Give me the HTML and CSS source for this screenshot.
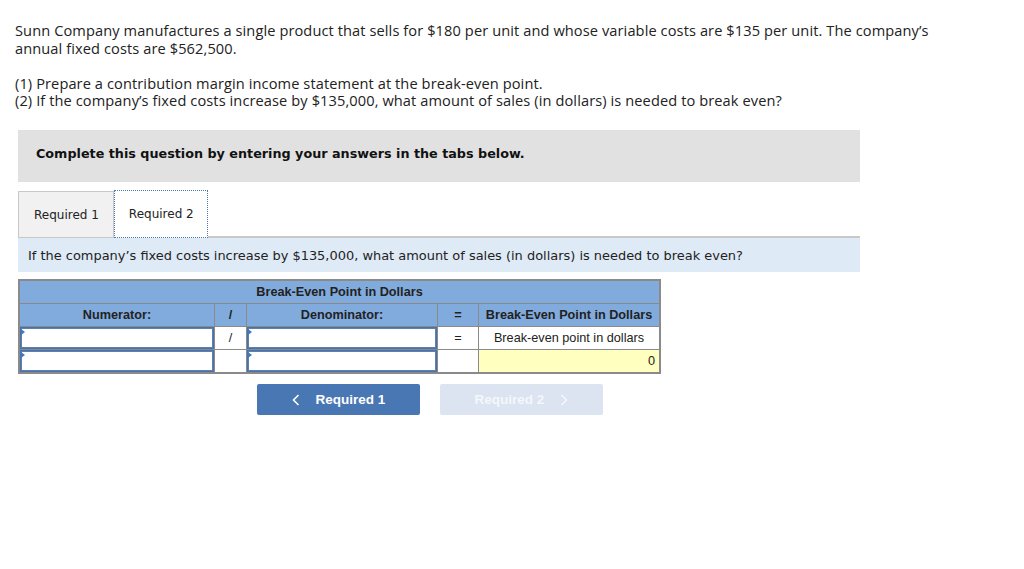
FILE: index.html
```html
<!DOCTYPE html>
<html>
<head>
<meta charset="utf-8">
<link rel="stylesheet" href="styles.css">
</head>
<body>
<div class="page">
  <div class="intro">
    <p>Sunn Company manufactures a single product that sells for $180 per unit and whose variable costs are $135 per unit. The company’s annual fixed costs are $562,500.</p>
    <p class="parts"><span>(1) Prepare a contribution margin income statement at the break-even point.</span><span>(2) If the company’s fixed costs increase by $135,000, what amount of sales (in dollars) is needed to break even?</span></p>
  </div>
  <div class="work">
    <div class="banner">Complete this question by entering your answers in the tabs below.</div>
    <div class="tabs">
      <div class="tab">Required 1</div>
      <div class="tab active">Required 2</div>
    </div>
    <div class="prompt">If the company’s fixed costs increase by $135,000, what amount of sales (in dollars) is needed to break even?</div>
    <table class="grid">
      <tr class="head">
        <th colspan="5">Break-Even Point in Dollars</th>
      </tr>
      <tr class="head">
        <th class="c-num">Numerator:</th>
        <th class="c-op">/</th>
        <th class="c-den">Denominator:</th>
        <th class="c-eq">=</th>
        <th class="c-res">Break-Even Point in Dollars</th>
      </tr>
      <tr>
        <td class="inp"><div class="box"></div></td>
        <td class="op">/</td>
        <td class="inp"><div class="box"></div></td>
        <td class="op">=</td>
        <td class="label">Break-even point in dollars</td>
      </tr>
      <tr>
        <td class="inp"><div class="box"></div></td>
        <td class="op"></td>
        <td class="inp"><div class="box"></div></td>
        <td class="op"></td>
        <td class="result">0</td>
      </tr>
    </table>
    <div class="nav">
      <button class="btn prev"><svg class="chev" width="8" height="12" viewBox="0 0 8 12"><path d="M6.5 1 L1.5 6 L6.5 11" fill="none" stroke="currentColor" stroke-width="1.6"/></svg>Required 1</button>
      <button class="btn next">Required 2<svg class="chev" width="8" height="12" viewBox="0 0 8 12"><path d="M1.5 1 L6.5 6 L1.5 11" fill="none" stroke="currentColor" stroke-width="1.6"/></svg></button>
    </div>
  </div>
</div>
</body>
</html>
```

FILE: styles.css
```css
html, body {
  margin: 0;
  padding: 0;
  background: #fff;
}
.page {
  padding: 22px 0 0 15px;
}
.intro {
  font-family: "Open Sans", "Lato", sans-serif;
  font-size: 14.6px;
  letter-spacing: 0.1px;
  line-height: 17.5px;
  color: #222;
  width: 930px;
}
.intro p {
  margin: 0 0 17.5px 0;
}
.intro p:last-child {
  margin-bottom: 0;
}
.parts span {
  display: block;
}
.work {
  margin-left: 3px;
  width: 842px;
}
.banner {
  background: #e1e1e1;
  height: 52px;
  box-sizing: border-box;
  display: flex;
  align-items: center;
  padding: 0 0 6px 18px;
  font-family: "DejaVu Sans", Verdana, sans-serif;
  font-weight: bold;
  font-size: 12.75px;
  color: #111;
  margin-top: 20.5px;
}
.tabs {
  display: flex;
  margin-top: 8px;
  border-bottom: 2px solid #c8c8c8;
  height: 46px;
  align-items: flex-end;
}
.tab {
  height: 46px;
  box-sizing: border-box;
  display: flex;
  align-items: center;
  padding: 0 14px 0 15px;
  font-family: "DejaVu Sans", Verdana, sans-serif;
  font-size: 12px;
  color: #222;
  background: #f1f1f1;
  border: 1px solid #c8c8c8;
  border-bottom: none;
  margin-bottom: -1px;
}
.tab.active {
  background: #fff;
  border: 1px dotted #4a78c0;
  height: 48px;
  margin-bottom: -2px;
  padding: 0 13px 0 14px;
}
.prompt {
  background: #dfeaf7;
  height: 34px;
  display: flex;
  align-items: center;
  padding-left: 10px;
  font-family: "DejaVu Sans", Verdana, sans-serif;
  font-size: 12.95px;
  color: #222;
}
.grid {
  margin-top: 7px;
  border-collapse: collapse;
  font-family: "Liberation Sans", Arial, sans-serif;
  font-size: 12.7px;
  color: #222;
  border: 2px solid #8a8a8a;
}
.grid th, .grid td {
  border: 1px solid #8a8a8a;
  padding: 0;
  height: 22px;
  text-align: center;
}
.grid th {
  background: #82abdd;
  font-weight: bold;
  height: 22px;
}
.c-num { width: 194px; }
.c-op { width: 31px; }
.c-den { width: 190px; }
.c-eq { width: 40px; }
.c-res { width: 180px; }
.grid td.inp {
  background: #fff;
  padding: 0;
}
.box {
  height: 20px;
  border: 1px solid #4a72a8;
  box-shadow: inset 0 0 0 1px #5a80b4;
  background: #fff;
  position: relative;
}
.box::before {
  content: "";
  position: absolute;
  left: 0;
  top: 1px;
  border-top: 3px solid transparent;
  border-bottom: 3px solid transparent;
  border-left: 4px solid #3f78c9;
}
.grid td.result {
  background: #ffffc0;
  text-align: right;
  padding-right: 4px;
}
.nav {
  display: flex;
  gap: 20px;
  margin-top: 10px;
  margin-left: 239px;
}
.btn {
  width: 163px;
  height: 31px;
  border: none;
  border-radius: 2px;
  font-family: "Liberation Sans", Arial, sans-serif;
  font-weight: bold;
  font-size: 13.5px;
  color: #fff;
  display: flex;
  align-items: center;
  justify-content: center;
  padding: 0;
}
.btn.prev {
  background: #4977b4;
}
.btn.next {
  background: #dbe4f0;
  color: #f4f7fb;
}
.prev .chev { margin-right: 16px; }
.next .chev { margin-left: 16px; }
```
